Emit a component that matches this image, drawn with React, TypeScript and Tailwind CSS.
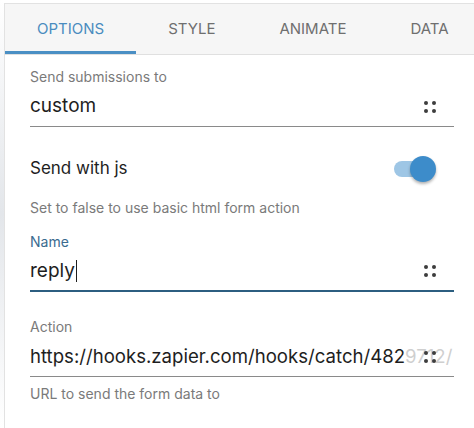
import React from "react";

const font = { fontFamily: "Inter, 'Noto Sans', sans-serif" };

function DragDots() {
  return (
    <span className="grid grid-cols-2 gap-[4px] px-[2px] py-[1px]">
      <span className="h-[4px] w-[4px] rounded-full bg-[#3d3d3d]" />
      <span className="h-[4px] w-[4px] rounded-full bg-[#3d3d3d]" />
      <span className="h-[4px] w-[4px] rounded-full bg-[#3d3d3d]" />
      <span className="h-[4px] w-[4px] rounded-full bg-[#3d3d3d]" />
    </span>
  );
}

function Label({ children, active }: { children: React.ReactNode; active?: boolean }) {
  return (
    <div className={`h-[20px] text-[14px] leading-[20px] ${active ? "text-[#3a6b8f]" : "text-[#7a7a7a]"}`}>
      {children}
    </div>
  );
}

function Input({ children, active }: { children: React.ReactNode; active?: boolean }) {
  return (
    <div
      className={`flex h-[40px] items-center text-[19px] text-[#1e1e1e] ${
        active ? "border-b-2 border-[#2c5e80]" : "border-b border-[#8a8a8a]"
      }`}
    >
      <div className="-mr-[32px] flex min-w-0 flex-1 items-center overflow-hidden whitespace-nowrap">{children}</div>
      <div className="relative z-10 mr-4 shrink-0">
        <DragDots />
      </div>
    </div>
  );
}

export default function App() {
  const tabs = ["OPTIONS", "STYLE", "ANIMATE", "DATA"];
  return (
    <div className="flex h-[428px] w-[474px] overflow-hidden bg-white" style={font}>
      <div className="w-[4px] shrink-0 bg-gradient-to-b from-white via-[#e3e6ea] to-white" />
      <div className="mt-[3px] min-w-0 flex-1 border-l border-t border-[#e2e2e2]">
        <div className="flex h-[51px] border-b border-[#e0e0e0] bg-[#f6f6f6]">
          {tabs.map((t, i) => (
            <div
              key={t}
              className={`flex items-center px-[32px] text-[15px] ${
                i === 0 ? "border-b-[3px] border-[#4a8fc4] pt-[3px] text-[#4a8cbf]" : "text-[#6f6f6f]"
              }`}
            >
              {t}
            </div>
          ))}
        </div>

        <div className="pl-[25px] pr-[20px] pt-[12px]">
          <Label>Send submissions to</Label>
          <Input>custom</Input>

          <div className="mt-[20px] flex h-[44px] items-center justify-between">
            <span className="text-[17px] text-[#1e1e1e]">Send with js</span>
            <span className="relative mr-5 h-[16px] w-[40px] rounded-full bg-[#9ec6e5]">
              <span className="absolute -right-[2px] top-1/2 h-[26px] w-[26px] -translate-y-1/2 rounded-full bg-[#3d8cca] shadow-[0_2px_3px_rgba(0,0,0,0.3)]" />
            </span>
          </div>
          <div className="mt-[7px] text-[14px] leading-[20px] text-[#7a7a7a]">
            Set to false to use basic html form action
          </div>

          <div className="mt-[14px]">
            <Label active>Name</Label>
            <Input active>
              reply
              <span className="ml-[1px] inline-block h-[22px] w-[1.5px] bg-[#1e1e1e]" />
            </Input>
          </div>

          <div className="mt-[25px]">
            <Label>Action</Label>
            <Input>
              <span className="text-[18.6px]">
                https://hooks.zapier.com/hooks/catch/482
                <span className="text-[#cfcfcf]">9712/</span>
              </span>
            </Input>
          </div>
          <div className="mt-[7px] text-[14px] leading-[20px] text-[#7a7a7a]">URL to send the form data to</div>
        </div>
      </div>
    </div>
  );
}
